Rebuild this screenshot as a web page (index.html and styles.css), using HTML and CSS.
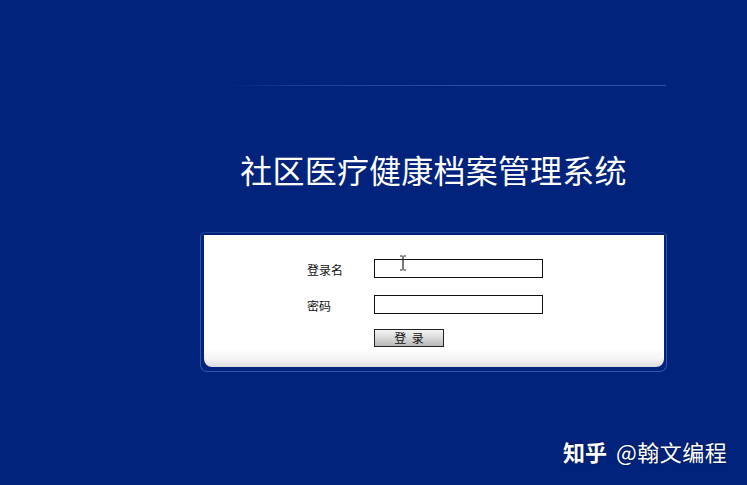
FILE: index.html
```html
<!DOCTYPE html>
<html lang="zh">
<head>
<meta charset="utf-8">
<title>社区医疗健康档案管理系统</title>
<link rel="stylesheet" href="styles.css">
</head>
<body>
<div class="page">
  <div class="topline"></div>
  <div class="main">
    <h1 class="title">社区医疗健康档案管理系统</h1>
    <div class="panel">
      <div class="card">
        <form class="form">
          <label class="label">登录名</label>
          <input class="field" type="text">
          <label class="label">密码</label>
          <input class="field" type="password">
          <span></span>
          <button class="btn" type="button">登&nbsp;&nbsp;录</button>
        </form>
      </div>
    </div>
  </div>
  <svg class="cursor" width="8" height="16" viewBox="0 0 8 16">
    <path d="M1 1h2.5M4.5 1H7M4 1.5v13M1 15h2.5M4.5 15H7" stroke="#222" stroke-width="1.2" fill="none"/>
  </svg>
  <div class="watermark"><span class="zh">知乎</span><span class="at">@翰文编程</span></div>
</div>
</body>
</html>
```
FILE: styles.css
```css
html, body {
  margin: 0;
  padding: 0;
  background: #01237b;
}
.page {
  position: relative;
  width: 747px;
  height: 485px;
  overflow: hidden;
  background: #01237b;
  font-family: "Noto Sans CJK SC", "Liberation Sans", sans-serif;
}
.topline {
  margin: 85px 0 0 224px;
  width: 442px;
  height: 1px;
  border-top-right-radius: 3px;
  background: linear-gradient(to right, rgba(50,85,165,0) 0%, rgba(50,85,165,0.6) 20%, #2d4f9f 60%, #3154a4 100%);
}
.main {
  margin-left: 200px;
  width: 467px;
}
.title {
  margin: 63px 0 0 0;
  height: 42px;
  line-height: 42px;
  text-align: center;
  color: #ffffff;
  font-weight: normal;
  font-size: 32px;
  letter-spacing: 0.2px;
  font-family: "Noto Sans CJK SC", sans-serif;
  position: relative;
  top: -1px;
}
.panel {
  margin-top: 41px;
  height: 140px;
  box-sizing: border-box;
  border: 1px solid #2f55a8;
  border-top-color: #1d3f94;
  border-radius: 5px 5px 7px 7px;
  padding: 2px 2px 0 3px;
}
.card {
  height: 132px;
  background: linear-gradient(to bottom, #ffffff 0%, #ffffff 86%, #f4f4f6 94%, #dcdce0 100%);
  border-radius: 0 0 8px 8px;
  box-sizing: border-box;
  padding: 24px 0 0 103px;
}
.form {
  display: grid;
  grid-template-columns: 67px 169px;
  grid-template-rows: 19px 19px 18px;
  row-gap: 17px;
  align-items: center;
  margin: 0;
}
.form .btn { margin-top: -5px; }
.label {
  font-size: 12px;
  color: #111;
  line-height: 19px;
  margin-top: 1px;
}
.field {
  box-sizing: border-box;
  width: 169px;
  height: 19px;
  margin: 0;
  padding: 0;
  border: 1px solid #111;
  background: #fff;
  outline: none;
}
.btn {
  box-sizing: border-box;
  width: 70px;
  height: 18px;
  margin: 0;
  padding: 0;
  border: 1px solid #222;
  background: linear-gradient(to bottom, #f4f4f4 0%, #dcdcdc 45%, #b8b8b8 100%);
  font-family: "Noto Sans CJK SC", sans-serif;
  font-size: 12px;
  line-height: 16px;
  color: #111;
}
.cursor {
  position: absolute;
  left: 399px;
  top: 255px;
}
.watermark {
  position: absolute;
  left: 563px;
  top: 436px;
  display: flex;
  gap: 9px;
  color: #ffffff;
  font-size: 22px;
  line-height: 30px;
  font-family: "Noto Sans CJK SC", sans-serif;
  text-shadow: 0 0 2px rgba(0,0,0,0.5);
  white-space: nowrap;
}
.zh { font-weight: bold; }
.at { letter-spacing: 0.5px; }
```
